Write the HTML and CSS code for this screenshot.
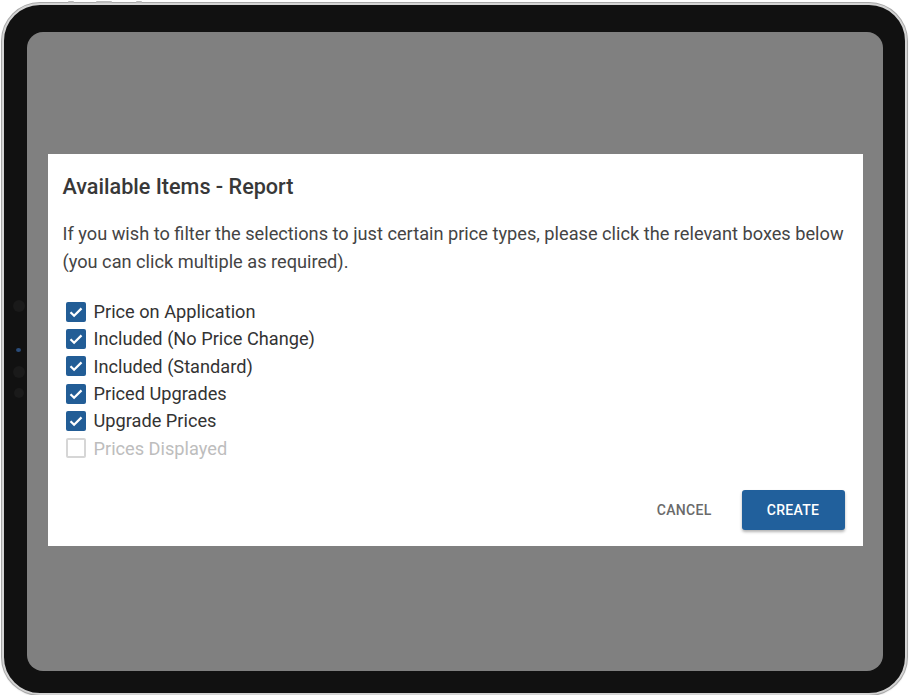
FILE: index.html
```html
<!DOCTYPE html>
<html>
<head>
  <title>Available Items - Report</title>
  <link rel="stylesheet" href="styles.css">
</head>
<body>
  <div class="device">
    <span class="key key-a"></span>
    <span class="key key-b"></span>
    <span class="key key-c"></span>
    <span class="cam cam-1"></span>
    <span class="cam cam-2"></span>
    <span class="cam cam-3"></span>
    <span class="cam cam-4"></span>

    <div class="screen">
      <div class="dialog">
        <h2 class="dialog-title">Available Items - Report</h2>
        <p class="dialog-text">If you wish to filter the selections to just certain price types, please click the relevant boxes below (you can click multiple as required).</p>

        <ul class="options">
          <li class="option checked"><span class="box"><svg viewBox="0 0 20 20"><path d="M4.5 10.2l3.6 3.6 7.4-7.4"/></svg></span>Price on Application</li>
          <li class="option checked"><span class="box"><svg viewBox="0 0 20 20"><path d="M4.5 10.2l3.6 3.6 7.4-7.4"/></svg></span>Included (No Price Change)</li>
          <li class="option checked"><span class="box"><svg viewBox="0 0 20 20"><path d="M4.5 10.2l3.6 3.6 7.4-7.4"/></svg></span>Included (Standard)</li>
          <li class="option checked"><span class="box"><svg viewBox="0 0 20 20"><path d="M4.5 10.2l3.6 3.6 7.4-7.4"/></svg></span>Priced Upgrades</li>
          <li class="option checked"><span class="box"><svg viewBox="0 0 20 20"><path d="M4.5 10.2l3.6 3.6 7.4-7.4"/></svg></span>Upgrade Prices</li>
          <li class="option disabled"><span class="box"></span>Prices Displayed</li>
        </ul>

        <div class="actions">
          <button class="btn btn-text">Cancel</button>
          <button class="btn btn-primary">Create</button>
        </div>
      </div>
    </div>
  </div>
</body>
</html>
```

FILE: styles.css
```css
html, body {
  margin: 0;
  background-color: #fff;
}

body {
  padding: 3px 0 0 2px;
  font-family: Roboto, "Liberation Sans", sans-serif;
}

/* tablet frame */
.device {
  position: relative;
  width: 856px;
  height: 639px;
  padding: 27px 22px 22px 23px;
  background-color: #111;
  border: 2px solid #d4d4d4;
  border-radius: 38px;
  box-shadow: 0 0 0 1px #a8a8a8, 0 1px 2px rgba(0, 0, 0, 0.25);
}

.key {
  position: absolute;
  top: -4px;
  height: 2px;
  background-color: #bbb;
  border-radius: 1px;
}

.key-a { left: 64px; width: 6px; }
.key-b { left: 92px; width: 16px; }
.key-c { left: 132px; width: 6px; }

.cam {
  position: absolute;
  left: 9px;
  width: 12px;
  height: 12px;
  border-radius: 50%;
  background-color: #1a1a1a;
}

.cam-1 { top: 295px; }
.cam-2 { top: 343px; left: 12px; width: 5px; height: 4px; background-color: #2a4c7a; }
.cam-3 { top: 361px; }
.cam-4 { top: 383px; width: 10px; height: 10px; left: 10px; }

.screen {
  width: 856px;
  height: 639px;
  background-color: #808080;
  border-radius: 16px;
  display: flex;
  align-items: center;
  justify-content: center;
  overflow: hidden;
}

/* dialog */
.dialog {
  width: 815px;
  height: 392px;
  margin-bottom: 3px;
  background-color: #fff;
  box-sizing: border-box;
  padding: 20px 18px 16px 15px;
  display: flex;
  flex-direction: column;
}

.dialog-title {
  margin: 0;
  font-size: 21.6px;
  font-weight: 500;
  line-height: 26px;
  color: #383838;
}

.dialog-text {
  margin: 20px 0 0 0;
  font-size: 18.2px;
  line-height: 28px;
  color: #444;
}

.options {
  list-style: none;
  margin: 22px 0 0 0;
  padding: 0;
}

.option {
  display: flex;
  align-items: center;
  height: 27.3px;
  font-size: 18.2px;
  color: #333;
}

.box {
  width: 20px;
  height: 20px;
  margin: 0 8px 0 3px;
  box-sizing: border-box;
  border-radius: 2px;
  display: flex;
}

.box svg {
  width: 20px;
  height: 20px;
  fill: none;
  stroke: #fff;
  stroke-width: 2.2;
}

.checked .box {
  background-color: #225d96;
}

.disabled {
  color: #bdbdbd;
}

.disabled .box {
  border: 2px solid #d6d6d6;
}

.actions {
  margin-top: auto;
  display: flex;
  justify-content: flex-end;
  align-items: center;
  gap: 14px;
}

.btn {
  font-family: Roboto, "Liberation Sans", sans-serif;
  font-size: 14px;
  font-weight: 500;
  text-transform: uppercase;
  letter-spacing: 0.3px;
  border: none;
  border-radius: 3px;
  height: 40px;
  padding: 0 16px;
  cursor: pointer;
}

.btn-text {
  background: none;
  color: #6a6a6a;
}

.btn-primary {
  width: 103px;
  background-color: #21609c;
  color: #fff;
  box-shadow: 0 2px 3px rgba(0, 0, 0, 0.3);
}
```
